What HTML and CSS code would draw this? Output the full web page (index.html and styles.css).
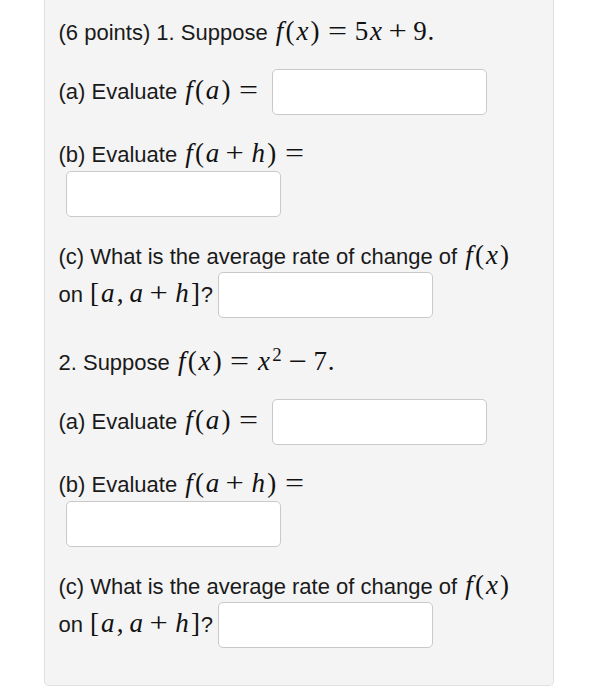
FILE: index.html
```html
<!DOCTYPE html>
<html>
<head>
<meta charset="utf-8">
<link rel="stylesheet" href="styles.css">
</head>
<body>
<div class="card">
  <section class="problem">
    <p class="line">(6 points) 1. Suppose <span class="m"><i>f</i>(<i>x</i>)<span class="rel">=</span>5<i>x</i><span class="bin">+</span>9.</span></p>
    <div class="row row-a"><span class="line">(a) Evaluate <span class="m"><i>f</i>(<i>a</i>)<span class="rel rel-end">=</span></span></span><input class="answer" type="text"></div>
    <p class="line line-b">(b) Evaluate <span class="m"><i>f</i>(<i>a</i><span class="bin">+</span><i>h</i>)<span class="rel">=</span></span></p>
    <input class="answer answer-block" type="text">
    <p class="line line-c">(c) What is the average rate of change of <span class="m"><i>f</i>(<i>x</i>)</span></p>
    <div class="row"><span class="line">on <span class="m">[<i>a</i>,<i class="sp">a</i><span class="bin">+</span><i>h</i>]</span>?</span><input class="answer answer-on" type="text"></div>
  </section>
  <section class="problem problem-2">
    <p class="line">2. Suppose <span class="m"><i>f</i>(<i>x</i>)<span class="rel">=</span><i>x</i><sup>2</sup><span class="bin bin-after-sup">&minus;</span>7.</span></p>
    <div class="row row-a"><span class="line">(a) Evaluate <span class="m"><i>f</i>(<i>a</i>)<span class="rel rel-end">=</span></span></span><input class="answer" type="text"></div>
    <p class="line line-b">(b) Evaluate <span class="m"><i>f</i>(<i>a</i><span class="bin">+</span><i>h</i>)<span class="rel">=</span></span></p>
    <input class="answer answer-block" type="text">
    <p class="line line-c">(c) What is the average rate of change of <span class="m"><i>f</i>(<i>x</i>)</span></p>
    <div class="row"><span class="line">on <span class="m">[<i>a</i>,<i class="sp">a</i><span class="bin">+</span><i>h</i>]</span>?</span><input class="answer answer-on" type="text"></div>
  </section>
</div>
</body>
</html>
```

FILE: styles.css
```css
html, body {
  margin: 0;
  padding: 0;
  background: #ffffff;
}

body {
  font-family: "Liberation Sans", Arial, sans-serif;
  font-size: 22px;
  color: #1a1a1a;
}

.card {
  width: 480px;
  margin: 0 auto;
  padding: 18px 14px 37px 14px;
  background: #f4f4f4;
  border: 1px solid #e0e0e0;
  border-top: none;
  border-radius: 0 0 5px 5px;
  box-sizing: content-box;
}

.problem-2 {
  margin-top: 30px;
}

.line {
  margin: 0;
  line-height: 30px;
  white-space: nowrap;
}

.row {
  display: flex;
  align-items: center;
}

.row-a {
  margin-top: 21px;
}

.line-b {
  margin-top: 25px;
}

.answer-block {
  display: block;
  margin: 1px 0 0 7px;
}

.line-c {
  margin-top: 25px;
}

.answer {
  width: 215px;
  height: 46px;
  box-sizing: border-box;
  border: 1px solid #c9c9c9;
  border-radius: 5px;
  background: #ffffff;
  padding: 0;
  font: inherit;
}

.row-a .answer {
  margin-left: 14px;
}

.answer-on {
  margin-left: 5px;
}

.m {
  font-family: "Liberation Serif", "Times New Roman", serif;
  font-size: 27px;
  line-height: 1;
  letter-spacing: 0.03em;
  color: #111;
  margin-left: 1px;
}

.m i {
  font-style: italic;
  padding: 0 0.05em 0 0.04em;
}

.rel {
  margin: 0 0.32em 0 0.36em;
  display: inline-block;
  transform: scaleX(1.25);
}

.rel-end {
  margin-right: 0.05em;
}

.bin {
  margin: 0 0.26em 0 0.22em;
  display: inline-block;
  transform: scaleX(1.2);
}

.bin-after-sup {
  margin-left: 0.3em;
}

.sp {
  margin-left: 0.16em;
}

.m sup {
  font-size: 0.7em;
  vertical-align: 0.5em;
  line-height: 0;
}
```
